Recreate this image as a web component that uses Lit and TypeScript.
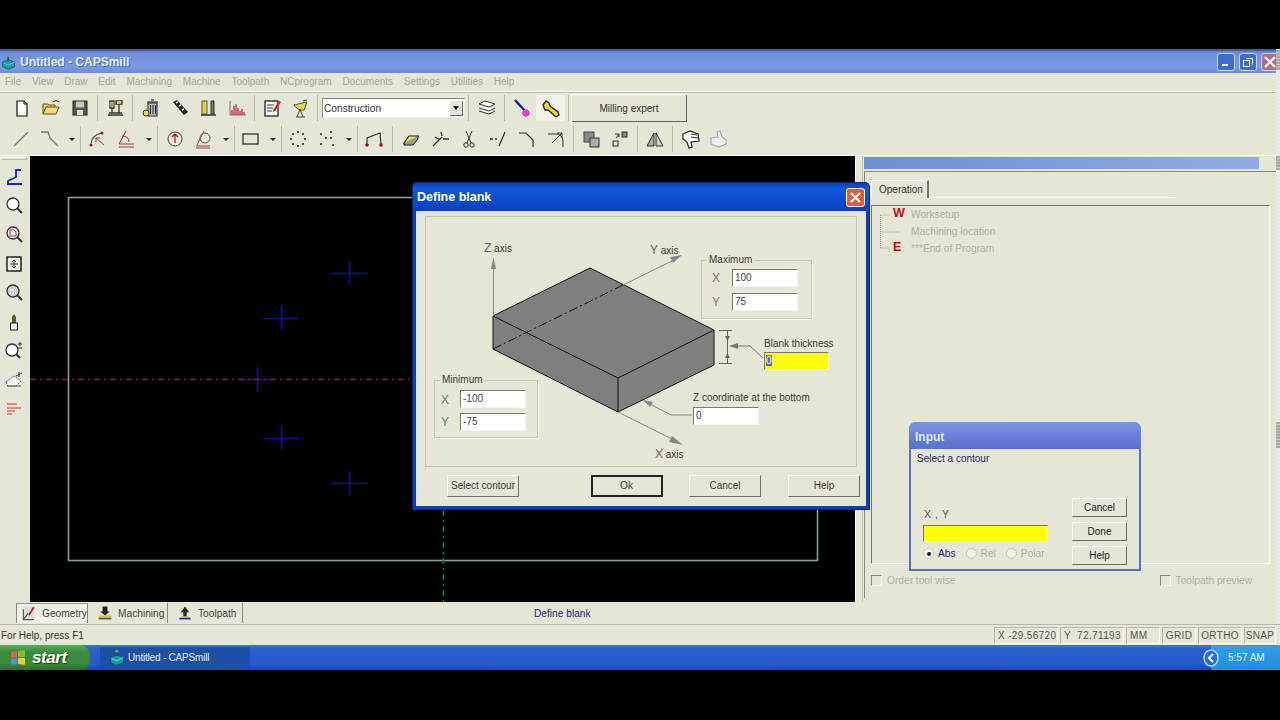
import { LitElement, html, css, svg } from "lit";
import { customElement } from "lit/decorators.js";

const icons: Record<string, any> = {
  new: svg`<path d="M5 3h7l3 3v12H5z" fill="#fff" stroke="#111" stroke-width="1.200"/><path d="M12 3v3h3" fill="none" stroke="#111"/>`,
  open: svg`<path d="M2 16V6h5l1 1h6v2" fill="#e8c860" stroke="#665520"/><path d="M2 16l3-7h13l-3 7z" fill="#f2d878" stroke="#665520"/><path d="M12 4q3-3 6 0" fill="none" stroke="#333"/>`,
  save: svg`<rect x="3" y="3" width="14" height="14" fill="#555" stroke="#222"/><rect x="6" y="3.500" width="8" height="6" fill="#c8c8b8"/><rect x="7" y="12" width="6" height="5" fill="#ddd"/>`,
  machine: svg`<path d="M3 17h15M4 15h13M5 3h4v7H5zM11 3h6v3h-6zM7 10v5M14 6v9" fill="none" stroke="#333" stroke-width="1.300"/><rect x="5" y="4" width="4" height="5" fill="#9aa070"/><rect x="12" y="3" width="4" height="3" fill="#d8c040"/>`,
  bin: svg`<rect x="8" y="5" width="9" height="13" fill="#bbb" stroke="#222"/><path d="M7 4h11M11 2h3M10.500 7v9M13 7v9M15.500 7v9" stroke="#222" fill="none"/><circle cx="6" cy="15" r="3" fill="#e8e040" stroke="#333"/>`,
  tools: svg`<path d="M4 4l4-2 11 12-4 3z" fill="#222"/><path d="M7 5l2-1M10 8l2-1M13 12l2-1" stroke="#fff" stroke-width="1.500"/>`,
  bars: svg`<rect x="4" y="3" width="5" height="13" fill="#e8d040" stroke="#555"/><path d="M13 3h3v13h-3z" fill="#777" stroke="#333"/><path d="M3 17h15" stroke="#333" stroke-width="1.500"/>`,
  chart: svg`<path d="M3 3v14h16" fill="none" stroke="#777"/><path d="M5 17v-5M7 17v-9M9 17V6M11 17v-7M13 17v-4M15 17v-6M17 17v-3" stroke="#c02030" stroke-width="1.200"/>`,
  note: svg`<rect x="3" y="3" width="13" height="15" fill="#fff" stroke="#222" stroke-width="1.300"/><path d="M5 7h7M5 10h6M5 13h5" stroke="#333"/><path d="M11 12l6-9 2 1-6 9-2 1z" fill="#d02020"/>`,
  dish: svg`<path d="M3 7l13-3-3 8q-6 1-10-5z" fill="#e6dc40" stroke="#555"/><path d="M9 11l-3 8M9 11l3 8M5 19h9" stroke="#444" fill="none"/><path d="M12 3l4-1" stroke="#333"/>`,
  layers: svg`<path d="M2 6l6-3 10 3-6 3zM2 10l10 3 6-3M2 13l10 3 6-3" fill="#fff" stroke="#333"/>`,
  wand: svg`<path d="M3 2l10 11" stroke="#1020a0" stroke-width="2.400"/><circle cx="14" cy="15" r="3.500" fill="#e040d0"/><path d="M10 15h8M14 11v8" stroke="#e040d0"/>`,
  wrench: svg`<path d="M2 7l3-4 3 2 1 3 8 6 1 3-3 2-8-7-3 0z" fill="#eed820" stroke="#222" stroke-width="1.300"/>`,
  line: svg`<path d="M3 17L17 3" stroke="#777" stroke-width="1.200"/>`,
  poly: svg`<path d="M1 3h7l2 6 8 8" fill="none" stroke="#777" stroke-width="1.300"/>`,
  arc3: svg`<path d="M3 16q0-10 11-12" fill="none" stroke="#555" stroke-width="1.200"/><circle cx="3" cy="16" r="1.500" fill="#a01020"/><circle cx="14" cy="4" r="1.500" fill="#a01020"/><path d="M16 16L8 9M8 9v4M8 9h4" stroke="#a04050" fill="none"/>`,
  arc2: svg`<path d="M2 15L9 2M12 13q0-6-7-6" fill="none" stroke="#8a3040"/><path d="M2 15h15M2 18h15" stroke="#a04050"/>`,
  circle: svg`<circle cx="10" cy="10" r="7" fill="none" stroke="#444"/><path d="M10 14V5M7 8l3-3 3 3" fill="none" stroke="#a01020" stroke-width="1.200"/>`,
  circ2: svg`<circle cx="11" cy="9" r="5" fill="none" stroke="#555"/><path d="M3 16L10 2M2 17h14M2 19h14" stroke="#a04050" fill="none"/>`,
  rect: svg`<rect x="2" y="5" width="15" height="10" fill="none" stroke="#333" stroke-width="1.300"/>`,
  dots: svg`<g fill="#222"><circle cx="10" cy="3" r="1"/><circle cx="15" cy="5" r="1"/><circle cx="17" cy="10" r="1"/><circle cx="15" cy="15" r="1"/><circle cx="10" cy="17" r="1"/><circle cx="5" cy="15" r="1"/><circle cx="3" cy="10" r="1"/><circle cx="5" cy="5" r="1"/></g>`,
  dots2: svg`<g fill="#222"><circle cx="4" cy="5" r="1"/><circle cx="14" cy="3" r="1"/><circle cx="9" cy="9" r="1"/><circle cx="4" cy="15" r="1"/><circle cx="16" cy="16" r="1"/><circle cx="14" cy="9" r="1"/></g>`,
  spline: svg`<path d="M3 16v-7l13-5 1 12" fill="none" stroke="#333" stroke-width="1.200"/><circle cx="3" cy="16" r="1.800" fill="#a01020"/><circle cx="17" cy="16" r="1.800" fill="#a01020"/>`,
  eraser: svg`<path d="M3 14l5-7h9l-5 7z" fill="#ecec48" stroke="#222" stroke-width="1.200"/><path d="M3 14v2h9l5-6V7" fill="#999" stroke="#222"/>`,
  trim: svg`<path d="M3 17l9-9M11 3l1 4M5 8l4 2M13 10h6" stroke="#333" stroke-width="1.300" fill="none"/>`,
  scissor: svg`<path d="M7 2l5 12M13 2L8 14" stroke="#333"/><circle cx="7" cy="16" r="2.200" fill="none" stroke="#333"/><circle cx="13" cy="16" r="2.200" fill="none" stroke="#333"/>`,
  extend: svg`<path d="M2 10h3M7 10h2M11 17l6-14" stroke="#333" stroke-width="1.300"/>`,
  fillet: svg`<path d="M2 4h7l7 7v7" fill="none" stroke="#333" stroke-width="1.200"/>`,
  chamfer: svg`<path d="M2 5h10q5 2 5 8v5M6 14L16 4M11 4h5v5" fill="none" stroke="#333"/>`,
  arrange: svg`<rect x="3" y="3" width="10" height="10" fill="#888" stroke="#444"/><rect x="9" y="9" width="9" height="9" fill="#aaa" stroke="#333"/>`,
  moveb: svg`<rect x="3" y="12" width="5" height="5" fill="none" stroke="#333"/><rect x="12" y="3" width="5" height="5" fill="#888" stroke="#333"/><path d="M6 9l3-4M5 5h4v3" stroke="#333" fill="none"/>`,
  mirror: svg`<path d="M9 4L2 17h7z" fill="#aaa" stroke="#333"/><path d="M11 4l7 13h-7z" fill="#ccc" stroke="#333"/>`,
  thumbd: svg`<path d="M3 5l7-3 8 3 1 7-8 1 1 5-3 1-2-6-4-3z" fill="#fff" stroke="#222" stroke-width="1.200"/><path d="M11 5l6 1M11 8l7 1" stroke="#222"/>`,
  thumbu: svg`<path d="M17 15l-7 3-8-3v-6l7-1-1-5 3-1 2 6 4 3z" fill="#eee" stroke="#aaa" stroke-width="1.200"/>`,
  ltool: svg`<path d="M17 3h-5v7l-8 4v3h14" fill="none" stroke="#1428a8" stroke-width="1.800"/>`,
  zoom: svg`<circle cx="9" cy="8" r="6" fill="#fff" stroke="#333" stroke-width="1.300"/><path d="M13 12l5 5" stroke="#333" stroke-width="2"/>`,
  zoomp: svg`<circle cx="9" cy="8" r="6" fill="#fff" stroke="#333" stroke-width="1.300"/><path d="M13 12l5 5" stroke="#333" stroke-width="2"/><path d="M6 5h4l2 2v4H6z" fill="#fff" stroke="#a03040"/>`,
  pan: svg`<rect x="3" y="3" width="14" height="14" fill="#f4f4f0" stroke="#222" stroke-width="1.500"/><path d="M10 6v8M6 10h8M8 8l2-2 2 2M8 12l2 2 2-2" stroke="#222" fill="none"/>`,
  zoomd: svg`<circle cx="9" cy="8" r="6" fill="#ccc" stroke="#333" stroke-width="1.300"/><path d="M13 12l5 5" stroke="#333" stroke-width="2"/><path d="M6 7h1M8.500 7h1M11 7h1M6 10h1M8.500 10h1M11 10h1" stroke="#fff" stroke-width="1.500"/>`,
  brush: svg`<path d="M8 11V5l2-3 2 3v6z" fill="#5c6028"/><rect x="6.500" y="11" width="7" height="7" fill="#eee" stroke="#222"/>`,
  zoompm: svg`<circle cx="8" cy="9" r="6" fill="#fff" stroke="#333" stroke-width="1.300"/><path d="M12 13l4 4" stroke="#333" stroke-width="2"/><path d="M14 3h4M16 1v4M14 7h4" stroke="#333"/>`,
  hand: svg`<path d="M2 12l8-6 7 5-5 5H4z" fill="#fff" stroke="#555" stroke-dasharray="2 1"/><path d="M12 6l6-3M15 2v5" stroke="#333"/><path d="M3 16h14" stroke="#555"/>`,
  lines: svg`<path d="M3 5h10M3 9h14M3 12h8M3 15h5" stroke="#d83020" stroke-width="1.100"/>`,
  geom: svg`<rect x="2" y="1" width="15" height="17" fill="#ddd"/><path d="M3 4v13h13M3 17l6-8" fill="none" stroke="#555" stroke-width="1.400"/><path d="M9 11l6-10 2 1-6 10z" fill="#c81818"/>`,
  mach: svg`<path d="M7 2h6v6h3l-6 5-6-5h3z" fill="#222"/><rect x="2" y="13" width="16" height="3" fill="#d8c040"/><rect x="2" y="16" width="16" height="2" fill="#555"/>`,
  tpath: svg`<path d="M10 2l5 7h-3v6H8V9H5z" fill="#222"/><rect x="5" y="14" width="10" height="2" fill="#d8c040"/><rect x="3" y="16" width="14" height="2" fill="#1428a8"/>`,
  app: svg`<path d="M2 10l7-3 8 3v6l-8 3-7-3z" fill="#18a0a0" stroke="#0a4a4a" stroke-width=".8"/><path d="M9 8V2" stroke="#444" stroke-width="2"/><rect x="7" y="1" width="4" height="3" fill="#888"/><path d="M3 11l6 3 8-4" stroke="#7ce" fill="none"/>`,
};
const ic = (n: string, s = 20) =>
  html`<svg width=${s} height=${s} viewBox="0 0 20 20" aria-hidden="true">${icons[n]}</svg>`;

type It = string;
const tb1: It[] = ["new","open","save","|6","machine","|6","bin","tools","bars","chart","|6","note","dish","|5"];
const tb1b: It[] = ["|7","layers","|6","wand"];
const tb2: It[] = ["line","poly",">","|5","arc3","arc2",">","|5","circle","circ2",">","|4","rect",">","|4","dots","dots2",">","|4","spline","|8","eraser","trim","scissor","extend","fillet","chamfer","|6","arrange","moveb","|6","mirror","|6","thumbd","thumbu"];
const left = ["ltool","zoom","zoomp","pan","zoomd","brush","zoompm","hand","lines"];

const item = (x: It) => {
  if (x === ">") return html`<span class="drop"></span>`;
  if (x[0] === "|") return html`<span class="sep sep${x.slice(1)}"></span>`;
  return html`<span class="slot">${ic(x)}</span>`;
};

@customElement("app-root")
export class AppRoot extends LitElement {
  static styles = css`
    :host { display: block; position: relative; width: 1280px; height: 720px; background: #000; overflow: hidden;
      font: 10.2px "Liberation Sans", Arial, sans-serif; color: #222; }
    * { box-sizing: border-box; }
    .win { position: absolute; inset: 49px 0 50px 0; display: flex; flex-direction: column; background: #e5e6d6; }
    .title { height: 24px; flex: none; display: flex; align-items: center; padding: 1px 2px 0 1px; gap: 3px; color: #e4eafc; font-weight: bold; font-size: 12px;
      background: linear-gradient(#3a5a9a 0, #3a5a9a 1px, #6c8ed8 3px, #7a9be0 70%, #6c8ed8 100%); }
    .title .name { flex: 1; text-shadow: 1px 1px 0 #5070b0; }
    .cap { width: 18px; height: 18px; border-radius: 3px; background: #3f6cd0; border: 1px solid #c8d4f0; display: grid; place-items: center; margin-right: 1px; }
    .cap.x { background: #b07080; margin: 0; width: 17px; }
    .menu { height: 19px; flex: none; display: flex; align-items: center; padding: 0 0 1px 5px; gap: 10.8px; color: #a4a598; font-size: 10px; border-bottom: 1px solid #fafaf0; box-shadow: 0 1px 0 #bbb; }
    .tb { height: 31px; flex: none; display: flex; align-items: center; }
    .tb1 { padding-left: 7px; margin-top: 1px; height: 30px; }
    .tb2 { padding-left: 6px; height: 32px; }
    .slot { width: 29px; height: 26px; flex: none; display: grid; place-items: center; }
    .slot.on { background: #f2f2ea; }
    .drop { width: 14px; flex: none; height: 26px; position: relative; }
    .drop::after { content: ""; position: absolute; left: 5px; top: 12px; border: 3px solid transparent; border-top: 3px solid #222; border-bottom: 0; }
    .sep { flex: none; height: 26px; background: linear-gradient(#b8b8a8, #b8b8a8) center / 1px 100% no-repeat; }
    .sep4 { width: 4px; } .sep5 { width: 5px; } .sep6 { width: 6px; } .sep7 { width: 7px; } .sep8 { width: 8px; }
    .combo { width: 143px; height: 20px; margin-left: 2px; flex: none; background: #fff; border: 1px solid #999; border-color: #888 #eee #eee #888; display: flex; align-items: center; justify-content: space-between; padding-left: 1px; color: #333; }
    .combo i { width: 14px; height: 16px; margin-right: 1px; background: #e5e6d6; box-shadow: inset 1px 1px 0 #fff, inset -1px -1px 0 #666; display: grid; place-items: center; }
    .combo i::after { content: ""; border: 3.5px solid transparent; border-top: 4px solid #111; border-bottom: 0; }
    .expert { width: 116px; height: 28px; flex: none; display: grid; place-items: center; box-shadow: inset 1px 1px 0 #fff, inset -1px -1px 0 #666; color: #333; font-size: 10px; }

    .main { flex: 1; min-height: 0; display: flex; border-top: 1px solid #fff; }
    .strip { width: 30px; flex: none; display: flex; flex-direction: column; align-items: center; padding: 1px 2px 0 0; }
    .strip .grip { width: 26px; height: 3px; flex: none; border: 1px solid #ccc; border-color: #fff #bbb #bbb #fff; margin-bottom: 2.5px; }
    .strip .s { height: 29px; flex: none; display: grid; place-items: center; }
    .canvas { width: 825px; flex: none; background: #000; position: relative; }
    .canvas svg { position: absolute; inset: 0; }
    .split { width: 8px; flex: none; border-left: 1px solid #fff; border-right: 1px solid #c4c4b4; }
    .rp { flex: 1; min-width: 0; display: flex; flex-direction: column; padding: 1px 0 4px 1px; position: relative; }
    .rbar { height: 12px; width: 395px; flex: none; background: linear-gradient(90deg, #6e8edb, #90abe6); }
    .rgroup { flex: 1; margin-top: 2px; border-top: 1px solid #8a8a78; border-left: 1px solid #8a8a78; padding: 8px 0 0 6px; display: flex; flex-direction: column; }
    .tabs { display: flex; height: 25px; flex: none; align-items: flex-start; }
    .tab { width: 58px; height: 18px; padding-left: 7px; line-height: 17px; border-top: 1px solid #fff; border-left: 1px solid #fff; border-right: 2px solid #777; color: #333; font-size: 10px; }
    .tabline { width: 246px; margin-top: 17px; height: 1px; background: #fff; }
    .tree { flex: 1; margin-right: 10px; border-top: 1px solid #777; border-left: 1px solid #777; border-bottom: 1px solid #fff; border-right: 1px solid #fff; padding: 0 0 0 39px; color: #b0b1a4; position: relative; }
    .tree .row { height: 17px; line-height: 17px; white-space: pre; position: relative; }
    .tree b { position: absolute; left: -18px; color: #c01018; font: bold 12.5px "Liberation Sans", sans-serif; line-height: 15px; }
    .tree svg { position: absolute; left: 8px; top: 2px; }
    .checks { height: 34px; flex: none; display: flex; justify-content: space-between; padding: 11px 28px 0 0; color: #b0b1a4; }
    .chk { display: flex; align-items: flex-start; gap: 5px; }
    .chk i { width: 11px; height: 11px; border: 1px solid; border-color: #888 #fff #fff #888; }
    .chk span { line-height: 12px; }

    .tabsbar { height: 23px; flex: none; display: flex; align-items: center; padding-left: 16px; border-bottom: 1px solid #b8b8a8; position: relative; color: #444; font-size: 10.2px; }
    .bt { display: flex; align-items: center; gap: 5px; height: 20px; padding-left: 5px; border-right: 1px solid #888; margin-right: 4px; }
    .bt.on { background: #f0f0e6; border-left: 1px solid #888; border-top: 1px solid #999; padding-left: 4px; }
    .bt1 { width: 72px; } .bt2 { width: 76px; } .bt3 { width: 71px; }
    .hint { position: absolute; left: 534px; top: 6px; color: #26267e; }
    .status { height: 20px; flex: none; display: flex; align-items: center; padding-right: 4px; color: #333; font-size: 10px; }
    .status .msg { flex: 1; padding-left: 1px; }
    .pane { height: 17px; line-height: 16px; margin-left: 2px; border: 1px solid; border-color: #b8b8a8 #fff #fff #b8b8a8; padding-left: 3px; white-space: pre; letter-spacing: .35px; color: #555; }
    .px { width: 64px; } .py { width: 64px; } .pm { width: 34px; } .pg { width: 34px; text-align: center; padding: 0; } .po { width: 44px; text-align: center; padding: 0; } .ps { width: 32px; text-align: center; padding: 0; }

    .task { height: 25px; flex: none; display: flex; align-items: center; color: #fff; background: linear-gradient(#3a7ae0 0, #2a62d0 3px, #2458cc 80%, #1c48a8 100%); }
    .start { width: 90px; height: 100%; display: flex; align-items: center; padding-left: 9px; gap: 5px; background: linear-gradient(#5cab5c, #3a8a3a 30%, #3a8a3a 75%, #2f6f2f); border-radius: 0 10px 10px 0; font: italic bold 17px "Liberation Sans", sans-serif; letter-spacing: -.4px; text-shadow: 1px 1px 1px #1a3a1a; }
    .tbtn { margin-left: 10px; width: 150px; height: 22px; display: flex; align-items: center; padding-left: 9px; gap: 2px; background: #1d4ea8; border-radius: 2px; font-size: 10px; letter-spacing: -.2px; color: #e8ecf8; }
    .tray { margin-left: auto; width: 69px; height: 100%; background: linear-gradient(#30a0e8, #1c8ee0); display: flex; align-items: center; gap: 9px; font-size: 10px; color: #e0f0ff; }
    .tray svg { margin-left: -8px; flex: none; }

    .dlg { position: absolute; left: 413px; top: 183px; width: 456px; height: 326px; background: #e5e6d6; border: 3px solid #0a3fb8; border-top: 0; border-radius: 4px 4px 0 0; box-shadow: 0 0 0 1px #0a2a80; }
    .dlgt { height: 28px; margin: 0 -3px; border-radius: 4px 4px 0 0; background: linear-gradient(#0a3fb8, #1458d8 20%, #0c48cc 70%, #0a40b8); color: #fff; font: bold 12.5px "Liberation Sans", sans-serif; display: flex; align-items: center; justify-content: space-between; padding: 0 4px; }
    .dx { width: 19px; height: 19px; border-radius: 3px; border: 1px solid #fff; background: #d8603c; display: grid; place-items: center; }
    .dbody { position: absolute; left: 0; right: 0; top: 28px; bottom: 0; padding: 5px 9px 0 9px; }
    .frame { height: 251px; outline: 1px solid #c4c4b4; outline-offset: -1px; position: relative; }
    .frame svg { position: absolute; left: -425px; top: -216px; width: 1280px; height: 720px; pointer-events: none; }
    .lab { position: absolute; color: #3c3c34; font-size: 10px; white-space: nowrap; line-height: 12px; }
    .lab.cap2 { font-size: 12px; color: #777; }
    .lab .big { font-size: 12px; color: #666; }
    .fld { position: absolute; background: #fff; border: 1px solid; border-color: #7c7c6c #f6f6ec #f6f6ec #7c7c6c; padding-left: 2px; color: #444; font-size: 10px; line-height: 16px; width: 66px; height: 18px; }
    .fld.yel { background: #ffff00; width: 65px; padding-left: 1px; }
    .gb { position: absolute; border: 1px solid #c8c8b6; box-shadow: 1px 1px 0 #f6f6ec; }
    .gb > span { position: absolute; left: 5px; top: -7px; background: #e5e6d6; padding: 0 2px; line-height: 12px; color: #3c3c34; font-size: 10px; }
    .sel { background: #5a68a8; color: #fff; }
    .dbtns { display: flex; margin-top: 8px; padding-left: 22px; }
    .btn { height: 22px; display: grid; place-items: center; background: #e5e6d6; border: 1px solid; border-color: #f8f8f0 #70705e #70705e #f8f8f0; color: #3c3c34; font-size: 10px; flex: none; padding-bottom: 1px; }
    .btn.def { border: 2px solid #222; padding-right: 1px; }
    .w72 { width: 72px; }
    .m1 { margin-left: 72px; } .m2 { margin-left: 26px; } .m3 { margin-left: 27px; }

    .inp { position: absolute; left: 909px; top: 422px; width: 232px; height: 149px; background: #e5e6d6; border: 2px solid #5a6fc8; border-top: 0; border-radius: 7px 7px 0 0; color: #26267e; }
    .inpt { height: 27px; margin: 0 -2px; border-radius: 7px 7px 0 0; background: linear-gradient(#7c94e4, #6a80d8 50%, #5a70cc); color: #dfe6f8; font: bold 12px "Liberation Sans", sans-serif; padding: 8px 0 0 6px; }
    .inpb { display: flex; padding: 4px 0 0 6px; height: 120px; justify-content: space-between; }
    .inpl { width: 132px; display: flex; flex-direction: column; }
    .inpl .msg { color: #26267e; height: 55px; flex: none; line-height: 12px; font-size: 10px; }
    .inpl .xy { color: #55554c; padding-left: 1px; margin: 0 0 5px 6px; letter-spacing: .6px; line-height: 12px; font-size: 10.5px; }
    .bar { height: 17px; width: 125px; flex: none; margin-left: 6px; background: #ffff00; border: 1px solid; border-color: #7c7c40 #f0f0d0 #f0f0d0 #7c7c40; }
    .rads { display: flex; align-items: center; gap: 10px; margin: 6px 0 0 6px; color: #b0b1a4; }
    .rad { display: flex; align-items: center; gap: 4px; }
    .rad i { width: 11px; height: 11px; border-radius: 50%; background: #f4f4ea; border: 1px solid #c4c4b4; display: grid; place-items: center; }
    .rad.on { color: #26267e; }
    .rad.on i { background: #fff; }
    .rad.on i::after { content: ""; width: 4px; height: 4px; border-radius: 50%; background: #111; }
    .inpr { position: absolute; right: 12px; top: 76px; display: flex; flex-direction: column; gap: 5px; }
    .inpr .btn { width: 55px; height: 19px; color: #222; }

    .edge { position: absolute; left: 1276px; top: 49px; width: 4px; height: 575px; background: repeating-linear-gradient(#eeeaf2 0 2px, #e8e8dc 2px 4px); pointer-events: none; }
    .edge i { position: absolute; left: 0; width: 4px; background: repeating-linear-gradient(#b8a0b8 0 1px, #a0b0a0 1px 2px, #c8c8b0 2px 3px); }
    .e1 { top: 1px; height: 20px; } .e2 { top: 107px; height: 14px; } .e3 { top: 373px; height: 26px; }
  `;

  render() {
    const crosses = [[349,273],[281,318],[257,379],[281,438],[349,483]];
    return html`
      <div class="win">
        <div class="title">
          ${ic("app", 16)}<span class="name">Untitled - CAPSmill</span>
          <span class="cap"><svg width="10" height="10"><rect x="1" y="7" width="6" height="2" fill="#fff"/></svg></span>
          <span class="cap"><svg width="12" height="12" fill="none" stroke="#fff"><rect x="1.500" y="4.500" width="6" height="6"/><path d="M4.500 2.500h6v6"/></svg></span>
          <span class="cap x"><svg width="12" height="12" stroke="#fff" stroke-width="2"><path d="M1 1l10 10M11 1L1 11"/></svg></span>
        </div>
        <div class="menu">
          ${["File","View","Draw","Edit","Machining","Machine","Toolpath","NCprogram","Documents","Settings","Utilities","Help"].map(m => html`<span>${m}</span>`)}
        </div>
        <div class="tb tb1">
          ${tb1.map(item)}
          <span class="combo">Construction<i></i></span>
          ${tb1b.map(item)}
          <span class="slot on">${ic("wrench")}</span>
          <span class="sep sep6"></span>
          <span class="expert">Milling expert</span>
        </div>
        <div class="tb tb2">${tb2.map(item)}</div>
        <div class="main">
          <div class="strip">
            <span class="grip"></span>
            ${left.map(n => html`<span class="s">${ic(n)}</span>`)}
          </div>
          <div class="canvas">
            <svg width="825" height="446" viewBox="30 156 825 446">
              <rect x="68.500" y="197.500" width="749" height="363" fill="none" stroke="#7fa2a2" stroke-width="1.600"/>
              ${crosses.map(([x,y]) => svg`<path d="M${x-18} ${y+.5}h36M${x+.5} ${y-12}v24" stroke="#0e1490" stroke-width="1.600"/>`)}
              <path d="M30 379.500H820" stroke="#8c1c1c" stroke-width="1.600" stroke-dasharray="6 4 2 4"/>
              <path d="M443.500 510V602" stroke="#12803a" stroke-width="1.600" stroke-dasharray="6 4 2 4"/>
            </svg>
          </div>
          <div class="split"></div>
          <div class="rp">
            <div class="rbar"></div>
            <div class="rgroup">
              <div class="tabs"><div class="tab">Operation</div><div class="tabline"></div></div>
              <div class="tree">
                <svg width="30" height="46" fill="none" stroke="#a0a094" stroke-dasharray="1 1"><path d="M.5 7v33M.5 7h10M.5 24h20M.5 40h10"/></svg>
                <div class="row"><b>W</b>Worksetup</div>
                <div class="row">Machining location</div>
                <div class="row"><b>E</b>***End of Program</div>
              </div>
              <div class="checks">
                <label class="chk"><i></i><span>Order tool wise</span></label>
                <label class="chk"><i></i><span>Toolpath preview</span></label>
              </div>
            </div>
          </div>
        </div>
        <div class="tabsbar">
          <span class="bt on bt1">${ic("geom", 16)}Geometry</span>
          <span class="bt bt2">${ic("mach", 16)}Machining</span>
          <span class="bt bt3">${ic("tpath", 16)}Toolpath</span>
          <span class="hint">Define blank</span>
        </div>
        <div class="status">
          <span class="msg">For Help, press F1</span>
          <span class="pane px">X -29.56720</span>
          <span class="pane py">Y  72.71193</span>
          <span class="pane pm">MM</span>
          <span class="pane pg">GRID</span>
          <span class="pane po">ORTHO</span>
          <span class="pane ps">SNAP</span>
        </div>
        <div class="task">
          <span class="start">
            <svg width="18" height="18" viewBox="0 0 18 18"><path d="M2 3l6-1v6l-6 1z" fill="#e8603a"/><path d="M9 2l7-1v7l-7 0z" fill="#7cc040"/><path d="M2 10l6-1v6l-6 1z" fill="#4a90e8"/><path d="M9 9h7v7l-7-1z" fill="#f0c830"/></svg>
            start
          </span>
          <span class="tbtn">${ic("app", 17)}Untitled - CAPSmill</span>
          <span class="tray">
            <svg width="16" height="18" viewBox="0 0 16 18"><ellipse cx="8" cy="9" rx="7" ry="8" fill="#2a6ae0" stroke="#b8d8ff" stroke-width="1.500"/><path d="M10 5L6 9l4 4" fill="none" stroke="#fff" stroke-width="2"/></svg>
            5:57 AM
          </span>
        </div>
      </div>

      <div class="edge"><i class="e1"></i><i class="e2"></i><i class="e3"></i></div>

      <div class="dlg">
        <div class="dlgt">Define blank
          <span class="dx"><svg width="11" height="11" stroke="#fff" stroke-width="2"><path d="M1 1l9 9M10 1l-9 9"/></svg></span>
        </div>
        <div class="dbody">
          <div class="frame">
            <svg viewBox="0 0 1280 720">
              <path d="M493 316L590 268L714 330V365L618 412L493 349Z" fill="#808080"/>
              <path d="M493 316L590 268L714 330L618 378ZM618 378V412M493 316V349L618 412L714 365V330" fill="none" stroke="#111"/>
              <path d="M493 349L623 285" stroke="#111" stroke-dasharray="9 3 2 3"/>
              <path d="M623 285L678 258" stroke="#888"/><path d="M682 255l-12 2 3 6z" fill="#888"/>
              <path d="M493.500 316V262" stroke="#888"/><path d="M493.500 257l-2.500 12h5z" fill="#888"/>
              <path d="M618 412L678 442" stroke="#888"/><path d="M683 445l-11-9-3 6z" fill="#888"/>
              <path d="M719 330.500h13M719 363.500h13M727.500 331v32" stroke="#666" fill="none"/>
              <path d="M725 336h5l-2.500 5zM725 358h5l-2.500-5z" fill="#666"/>
              <path d="M735 346h15l13 12" stroke="#777" fill="none"/><path d="M729 346l9-3v6z" fill="#777"/>
              <path d="M650 404l21 11h21" stroke="#888" fill="none"/><path d="M643 400l10 2-3 5z" fill="#888"/>
            </svg>
            <span class="lab" style="left:59px;top:26px"><span class="big">Z</span> axis</span>
            <span class="lab" style="left:225px;top:28px"><span class="big">Y</span> axis</span>
            <span class="lab" style="left:230px;top:232px"><span class="big">X</span> axis</span>
            <span class="lab" style="left:339px;top:122px">Blank thickness</span>
            <span class="lab" style="left:268px;top:176px">Z coordinate at the bottom</span>
            <div class="gb" style="left:276px;top:44px;width:111px;height:59px"><span>Maximum</span></div>
            <span class="lab cap2" style="left:287px;top:56px">X</span>
            <span class="lab cap2" style="left:287px;top:80px">Y</span>
            <div class="fld" style="left:307px;top:53px">100</div>
            <div class="fld" style="left:307px;top:77px">75</div>
            <div class="gb" style="left:9px;top:164px;width:104px;height:58px"><span>Minimum</span></div>
            <span class="lab cap2" style="left:16px;top:178px">X</span>
            <span class="lab cap2" style="left:16px;top:200px">Y</span>
            <div class="fld" style="left:35px;top:174px">-100</div>
            <div class="fld" style="left:35px;top:197px">-75</div>
            <div class="fld yel" style="left:339px;top:136px"><span class="sel">0</span></div>
            <div class="fld" style="left:268px;top:191px">0</div>
          </div>
          <div class="dbtns">
            <span class="btn w72">Select contour</span>
            <span class="btn def w72 m1">Ok</span>
            <span class="btn w72 m2">Cancel</span>
            <span class="btn w72 m3">Help</span>
          </div>
        </div>
      </div>

      <div class="inp">
        <div class="inpt">Input</div>
        <div class="inpb">
          <div class="inpl">
            <div class="msg">Select a contour</div>
            <div class="xy">X , Y</div>
            <div class="bar"></div>
            <div class="rads">
              <span class="rad on"><i></i>Abs</span>
              <span class="rad"><i></i>Rel</span>
              <span class="rad"><i></i>Polar</span>
            </div>
          </div>
          <div class="inpr">
            <span class="btn">Cancel</span>
            <span class="btn">Done</span>
            <span class="btn">Help</span>
          </div>
        </div>
      </div>
    `;
  }
}
